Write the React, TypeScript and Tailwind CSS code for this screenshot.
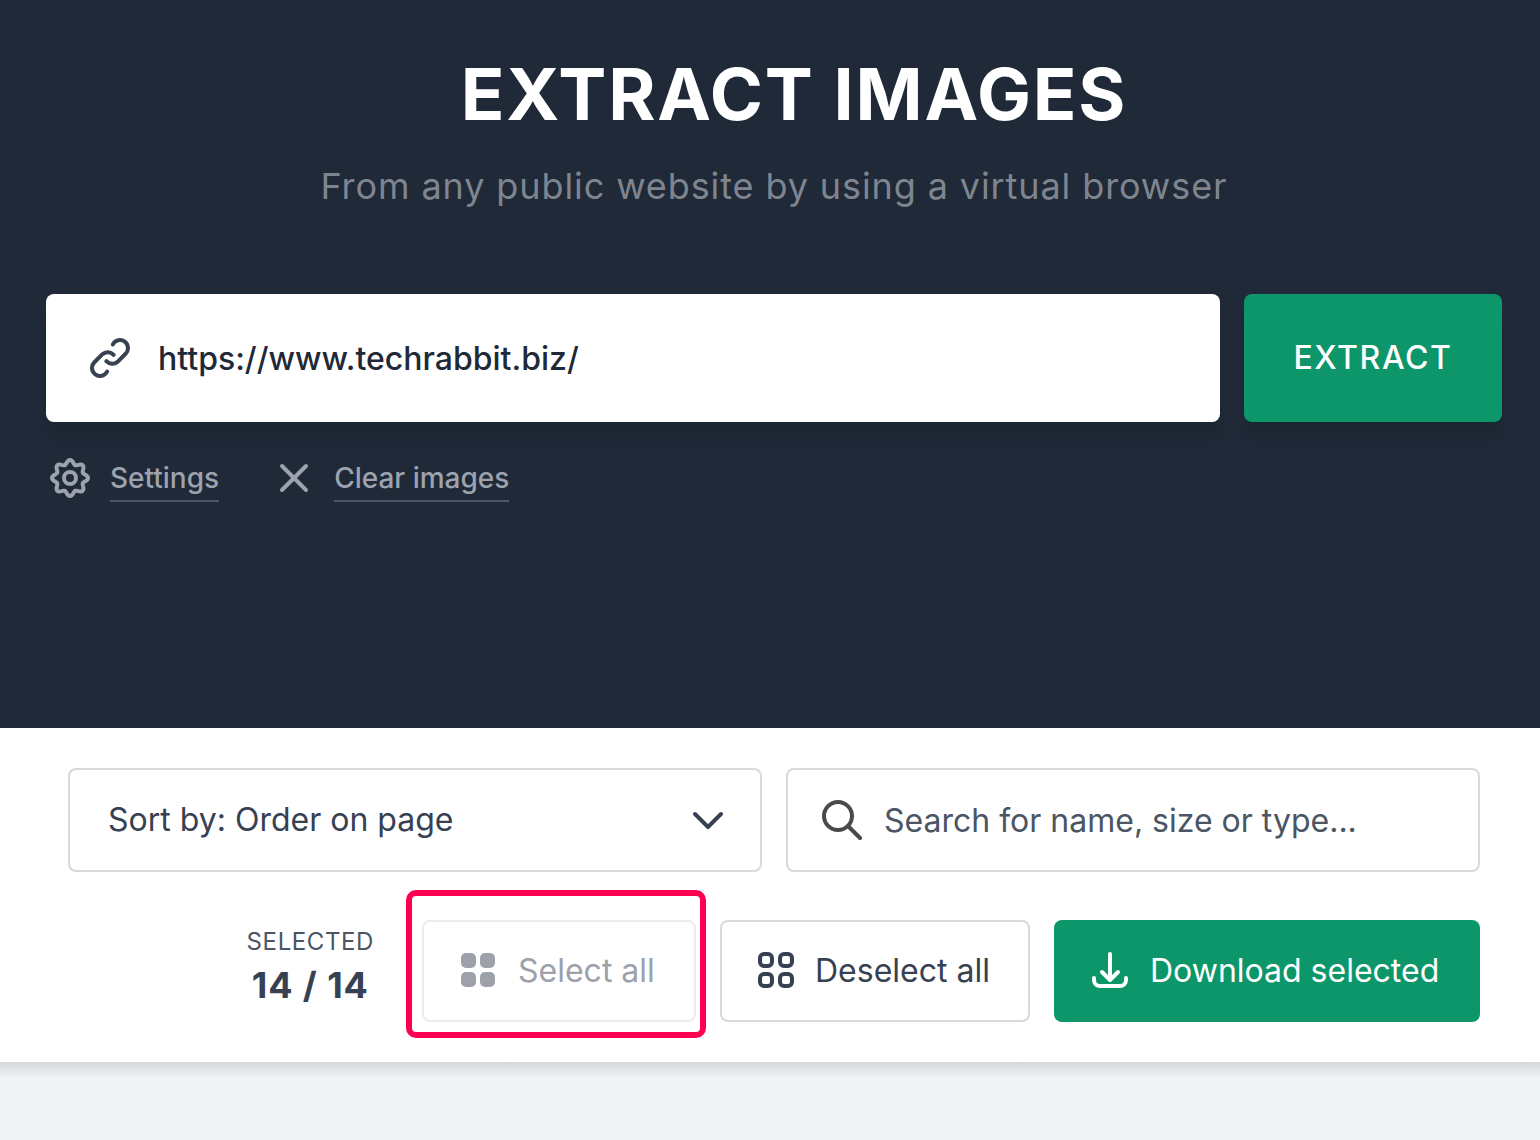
import type { ReactNode } from 'react';

function Icon({ size, children, className = '' }: { size: number; children: ReactNode; className?: string }) {
  return (
    <svg
      width={size}
      height={size}
      viewBox={`0 0 ${size} ${size}`}
      fill="none"
      stroke="currentColor"
      strokeWidth={4}
      strokeLinecap="round"
      strokeLinejoin="round"
      aria-hidden="true"
      className={`shrink-0 ${className}`}
    >
      {children}
    </svg>
  );
}

// Eight soft teeth: the radius swings between valley and tooth eight times a turn.
function gearOutline() {
  const points: string[] = [];
  for (let deg = 0; deg < 360; deg += 3) {
    const a = (deg * Math.PI) / 180;
    const r = 15.9 + 2.1 * Math.cos(8 * a);
    points.push(`${(20 + r * Math.sin(a)).toFixed(2)} ${(20 - r * Math.cos(a)).toFixed(2)}`);
  }
  return `M${points.join('L')}Z`;
}

const GEAR = gearOutline();

export default function App() {
  return (
    <div className="flex min-h-screen flex-col bg-[#f2f3f5] font-['Inter',sans-serif]">
      <header className="bg-[#202938] pt-[54px] pr-[38px] pb-[226px] pl-[46px]">
        <h1 className="pl-10 text-center text-[72px] leading-20 font-bold tracking-wide text-white">EXTRACT IMAGES</h1>
        <p className="mt-8 text-center text-4xl leading-10 tracking-wide text-[#7f858f]">
          From any public website by using a virtual browser
        </p>
        <form className="mt-[88px] flex gap-6" onSubmit={(e) => e.preventDefault()}>
          <label className="flex h-32 min-w-0 flex-1 items-center gap-7 rounded-lg bg-white pl-11 text-[#374151] shadow-[0_20px_8px_-4px_#1d2732]">
            <Icon size={40}>
              <path d="M22.9 6.4A8 8 0 1 1 35.6 15.8L27.6 23.8A8 8 0 0 1 16.4 23.2" />
              <path d="M17.1 33.6A8 8 0 1 1 4.4 24.2L12.4 16.2A8 8 0 0 1 23.6 16.8" />
            </Icon>
            <input
              type="text"
              aria-label="Website address"
              defaultValue="https://www.techrabbit.biz/"
              className="h-full min-w-0 flex-1 rounded-r-lg bg-transparent text-[32px] font-medium text-[#1f2937] outline-none"
            />
          </label>
          <button
            type="submit"
            className="h-32 w-[258px] rounded-lg bg-[#0c9669] text-[32px] font-medium tracking-wider text-white shadow-[0_20px_8px_-4px_#1d2732]"
          >
            EXTRACT
          </button>
        </form>
        <div className="mt-9 flex gap-[55px] pl-1 text-[28px] leading-10 font-medium text-[#9ca3af]">
          <button type="button" className="flex gap-5">
            <Icon size={40}>
              <path d={GEAR} />
              <circle cx="20" cy="20" r="6" />
            </Icon>
            <span className="border-b-2 border-[#4b5563] pb-0.5">Settings</span>
          </button>
          <button type="button" className="flex gap-5">
            <Icon size={40}>
              <path d="M8 8l24 24M32 8L8 32" />
            </Icon>
            <span className="border-b-2 border-[#4b5563] pb-0.5">Clear images</span>
          </button>
        </div>
      </header>

      <main className="bg-white pt-10 pr-[60px] pb-10 pl-[68px]">
        <div className="grid grid-cols-2 gap-6">
          <div className="relative h-[104px] min-w-0">
            <select
              aria-label="Sort images"
              className="h-full w-full appearance-none rounded-lg border-2 border-[#d9d9d9] bg-white px-[38px] text-[32px] text-[#374151]"
            >
              <option>Sort by: Order on page</option>
            </select>
            <Icon size={40} className="pointer-events-none absolute top-8 right-[34px] text-[#374151]">
              <path d="M7 14l13 13 13-13" />
            </Icon>
          </div>
          <label className="flex h-[104px] min-w-0 items-center gap-[22px] rounded-lg border-2 border-[#d9d9d9] pl-8 text-[#4a4a4a]">
            <Icon size={42}>
              <circle cx="18" cy="17" r="14" />
              <path d="M28 27L40 39" />
            </Icon>
            <input
              type="text"
              aria-label="Search images"
              placeholder="Search for name, size or type..."
              className="h-full min-w-0 flex-1 rounded-r-lg bg-transparent text-[32px] text-[#374151] outline-none placeholder:text-[#4b5563]"
            />
          </label>
        </div>

        <div className="mt-12 flex justify-end gap-6">
          <div className="mr-6 text-center text-[#4b5563]">
            <div className="mt-1 text-2xl leading-9 tracking-wide">SELECTED</div>
            <div className="mt-1 text-4xl leading-[42px] font-bold tracking-wide text-[#374151]">14 / 14</div>
          </div>
          <div className="relative">
            <button
              type="button"
              disabled
              className="flex h-[102px] w-[274px] items-center gap-5 rounded-lg border-2 border-[#ececec] pl-[34px] text-[32px] text-[#9ca1aa]"
            >
              <Icon size={40}>
                <g fill="currentColor" stroke="none">
                  <rect x="3" y="2" width="15" height="15" rx="5" />
                  <rect x="22" y="2" width="15" height="15" rx="5" />
                  <rect x="3" y="21" width="15" height="15" rx="5" />
                  <rect x="22" y="21" width="15" height="15" rx="5" />
                </g>
              </Icon>
              Select all
            </button>
            <div className="pointer-events-none absolute -top-[30px] -right-2.5 -bottom-4 -left-4 rounded-[10px] border-[6px] border-[#ff0050]" />
          </div>
          <button
            type="button"
            className="flex h-[102px] w-[310px] items-center gap-[18px] rounded-lg border-2 border-[#d9d9d9] pl-[33px] text-[32px] text-[#374151]"
          >
            <Icon size={42}>
              <rect x="5" y="4" width="12" height="12" rx="4" />
              <rect x="25" y="4" width="12" height="12" rx="4" />
              <rect x="5" y="24" width="12" height="12" rx="4" />
              <rect x="25" y="24" width="12" height="12" rx="4" />
            </Icon>
            Deselect all
          </button>
          <button
            type="button"
            className="flex h-[102px] w-[426px] items-center gap-5 rounded-lg bg-[#0c9669] pl-9 text-[32px] text-white"
          >
            <Icon size={40}>
              <path d="M20 3v26M12 21l8 8 8-8M4 27v2a6 6 0 0 0 6 6h20a6 6 0 0 0 6-6v-2" />
            </Icon>
            Download selected
          </button>
        </div>
      </main>
      <div className="h-4 bg-linear-to-b from-[#d4d6d9] to-[#f2f3f5]" />
    </div>
  );
}
